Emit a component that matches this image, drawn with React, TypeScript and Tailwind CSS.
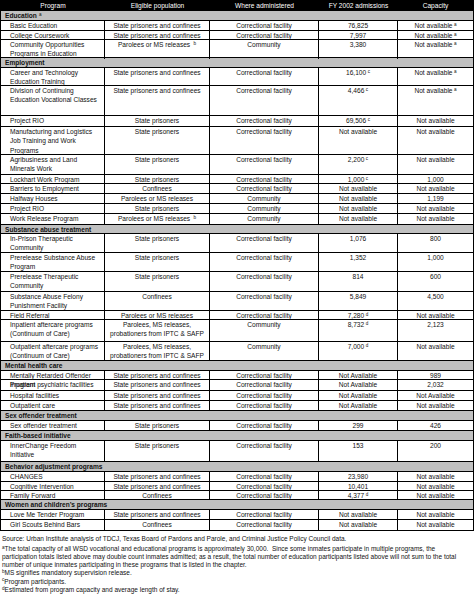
type Row =
  | { section: string; sup?: string; h: string }
  | { cells: string[]; h: string };

const COLS = "grid grid-cols-[104px_105px_109px_79px_75px]";

const SPC = "State prisoners and confinees";
const SP = "State prisoners";
const CF = "Correctional facility";
const NA = "Not available";
const PAR = "Parolees, MS releases,\nprobationers from IPTC & SAFP";

const rows: Row[] = [
  { section: "Education", sup: "a", h: "h-[10px]" },
  { cells: ["Basic Education", SPC, CF, "76,825", "Not available^a"], h: "h-[10px]" },
  { cells: ["College Coursework", SPC, CF, "7,997", "Not available^a"], h: "h-[9px]" },
  { cells: ["Community Opportunities\nPrograms in Education", "Parolees or MS releases ^b", "Community", "3,380", "Not available^a"], h: "h-[18px]" },
  { section: "Employment", h: "h-[10px]" },
  { cells: ["Career and Technology\nEducation Training", SPC, CF, "16,100^c", "Not available^a"], h: "h-[18px]" },
  { cells: ["Division of Continuing\nEducation Vocational Classes", SPC, CF, "4,466^c", "Not available^a"], h: "h-[30px]" },
  { cells: ["Project RIO", SP, CF, "69,506^c", NA], h: "h-[11px]" },
  { cells: ["Manufacturing and Logistics\nJob Training and Work\nPrograms", SP, CF, NA, NA], h: "h-[28px]" },
  { cells: ["Agribusiness and Land\nMinerals Work", SP, CF, "2,200^c", NA], h: "h-[20px]" },
  { cells: ["Lockhart Work Program", SP, CF, "1,000^c", "1,000"], h: "h-[9px]" },
  { cells: ["Barriers to Employment", "Confinees", CF, NA, NA], h: "h-[10px]" },
  { cells: ["Halfway Houses", "Parolees or MS releases", "Community", NA, "1,199"], h: "h-[10px]" },
  { cells: ["Project RIO", SP, "Community", NA, NA], h: "h-[10px]" },
  { cells: ["Work Release Program", "Parolees or MS releases ^b", "Community", NA, NA], h: "h-[11px]" },
  { section: "Substance abuse treatment", h: "h-[9px]" },
  { cells: ["In-Prison Therapeutic\nCommunity", SP, CF, "1,076", "800"], h: "h-[19px]" },
  { cells: ["Prerelease Substance Abuse\nProgram", SP, CF, "1,352", "1,000"], h: "h-[19px]" },
  { cells: ["Prerelease Therapeutic\nCommunity", SP, CF, "814", "600"], h: "h-[20px]" },
  { cells: ["Substance Abuse Felony\nPunishment Facility", "Confinees", CF, "5,849", "4,500"], h: "h-[19px]" },
  { cells: ["Field Referral", "Parolees or MS releases", CF, "7,280^d", NA], h: "h-[9px]" },
  { cells: ["Inpatient aftercare programs\n(Continuum of Care)", PAR, "Community", "8,732^d", "2,123"], h: "h-[22px]" },
  { cells: ["Outpatient aftercare programs\n(Continuum of Care)", PAR, "Community", "7,000^d", NA], h: "h-[19px]" },
  { section: "Mental health care", h: "h-[10px]" },
  { cells: ["Mentally Retarded Offender\nProgram", SPC, CF, "Not Available", "989"], h: "h-[9px]" },
  { cells: ["Inpatient psychiatric facilities", SPC, CF, "Not Available", "2,032"], h: "h-[11px]" },
  { cells: ["Hospital facilities", SPC, CF, "Not Available", "Not Available"], h: "h-[10px]" },
  { cells: ["Outpatient care", SPC, CF, "Not Available", NA], h: "h-[10px]" },
  { section: "Sex offender treatment", h: "h-[10px]" },
  { cells: ["Sex offender treatment", SP, CF, "299", "426"], h: "h-[10px]" },
  { section: "Faith-based initiative", h: "h-[10px]" },
  { cells: ["InnerChange Freedom\nInitiative", SP, CF, "153", "200"], h: "h-[21px]" },
  { section: "Behavior adjustment programs", h: "h-[10px]" },
  { cells: ["CHANGES", SPC, CF, "23,980", NA], h: "h-[10px]" },
  { cells: ["Cognitive Intervention", SPC, CF, "10,401", NA], h: "h-[9px]" },
  { cells: ["Family Forward", "Confinees", CF, "4,377^d", NA], h: "h-[9px]" },
  { section: "Women and children\u2019s programs", h: "h-[10px]" },
  { cells: ["Love Me Tender Program", SPC, CF, NA, NA], h: "h-[10px]" },
  { cells: ["Girl Scouts Behind Bars", "Confinees", CF, NA, NA], h: "h-[11px]" },
];

// "text^x" -> text with superscript x
function Txt({ v }: { v: string }) {
  const [t, s] = v.split("^");
  return (
    <>
      {t}
      {s && <sup className="ml-[1.5px] text-[4.6px]">{s}</sup>}
    </>
  );
}

function Sup({ c }: { c: string }) {
  return <sup className="text-[4.6px]">{c}</sup>;
}

export default function App() {
  return (
    <div className="w-[474px] h-[602px] bg-white font-['Liberation_Sans',Arial,sans-serif] text-[6.6px] leading-[9.3px] text-[#111]">
      <div className="border-l border-r border-black">
        {/* header */}
        <div className={`${COLS} h-[11px] bg-black text-white leading-[11px] text-center`}>
          <div>Program</div>
          <div>Eligible population</div>
          <div>Where administered</div>
          <div>FY 2002 admissions</div>
          <div>Capacity</div>
        </div>

        {rows.map((r, i) =>
          "section" in r ? (
            <div key={i} className={`${r.h} border-b border-black bg-[#c0c0c0] pl-[4px] font-bold`}>
              {r.section}
              {r.sup && <sup className="ml-[2px] text-[4.6px] font-normal">{r.sup}</sup>}
            </div>
          ) : (
            <div key={i} className={`${COLS} ${r.h} border-b border-black`}>
              {r.cells.map((c, j) => (
                <div
                  key={j}
                  className={
                    j === 0
                      ? "pl-[9px] border-r border-black whitespace-pre-line"
                      : j === 4
                        ? "text-center whitespace-pre-line"
                        : "text-center border-r border-black whitespace-pre-line"
                  }
                >
                  <Txt v={c} />
                </div>
              ))}
            </div>
          )
        )}
      </div>

      {/* notes */}
      <div className="pl-[2px] pt-[4px] text-[6.5px] leading-[7.7px] whitespace-nowrap">
        <p className="mb-[2.5px]">
          Source: Urban Institute analysis of TDCJ, Texas Board of Pardons and Parole, and Criminal Justice Policy Council data.
        </p>
        <p className="mb-[0.8px]">
          <Sup c="a" />
          The total capacity of all WSD vocational and educational programs is approximately 30,000.&nbsp; Since some inmates participate in multiple programs, the
          <br />
          participation totals listed above may double count inmates admitted; as a result, the total number of education participants listed above will not sum to the total
          <br />
          number of unique inmates participating in these programs that is listed in the chapter.
        </p>
        <p className="mb-[0.8px]">
          <Sup c="b" />
          MS signifies mandatory supervision release.
        </p>
        <p className="mb-[0.8px]">
          <Sup c="c" />
          Program participants.
        </p>
        <p>
          <Sup c="d" />
          Estimated from program capacity and average length of stay.
        </p>
      </div>
    </div>
  );
}
